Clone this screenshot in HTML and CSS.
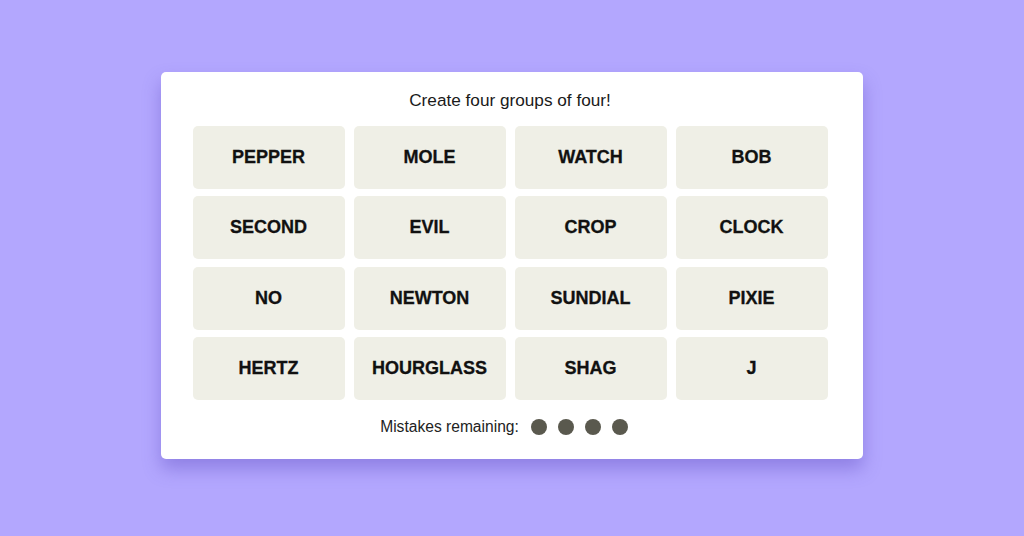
FILE: index.html
```html
<!DOCTYPE html>
<html>
<head>
<meta charset="utf-8">
<link rel="stylesheet" href="styles.css">
</head>
<body>
<div class="page">
  <div class="card">
    <div class="title">Create four groups of four!</div>
    <div class="grid">
      <div class="tile">PEPPER</div>
      <div class="tile">MOLE</div>
      <div class="tile">WATCH</div>
      <div class="tile">BOB</div>
      <div class="tile">SECOND</div>
      <div class="tile">EVIL</div>
      <div class="tile">CROP</div>
      <div class="tile">CLOCK</div>
      <div class="tile">NO</div>
      <div class="tile">NEWTON</div>
      <div class="tile">SUNDIAL</div>
      <div class="tile">PIXIE</div>
      <div class="tile">HERTZ</div>
      <div class="tile">HOURGLASS</div>
      <div class="tile">SHAG</div>
      <div class="tile">J</div>
    </div>
    <div class="mistakes">
      <span class="label">Mistakes remaining:</span>
      <span class="dots"><span class="dot"></span><span class="dot"></span><span class="dot"></span><span class="dot"></span></span>
    </div>
  </div>
</div>
</body>
</html>
```
FILE: styles.css
```css
html, body {
  margin: 0;
  padding: 0;
}
body {
  width: 1024px;
  height: 536px;
  background: #b3a7fe;
  font-family: "Liberation Sans", Arial, sans-serif;
  overflow: hidden;
}
.page {
  display: flex;
  justify-content: center;
  padding-top: 72px;
}
.card {
  width: 702px;
  height: 387px;
  box-sizing: border-box;
  background: #ffffff;
  border-radius: 5px;
  box-shadow: 0 10px 18px rgba(90, 70, 190, 0.4);
  padding-top: 18px;
  display: flex;
  flex-direction: column;
  align-items: center;
}
.title {
  font-size: 17.2px;
  line-height: 20px;
  color: #1a1a1a;
  height: 20px;
  margin-bottom: 16px;
  margin-right: 4px;
}
.grid {
  display: grid;
  grid-template-columns: repeat(4, 152px);
  grid-auto-rows: 63px;
  column-gap: 9px;
  row-gap: 7.33px;
  margin-right: 4px;
}
.tile {
  background: #efefe6;
  border-radius: 5px;
  display: flex;
  align-items: center;
  justify-content: center;
  font-weight: bold;
  font-size: 18px;
  color: #111111;
  -webkit-text-stroke: 0.3px #111111;
}
.mistakes {
  margin-top: 17px;
  height: 20px;
  display: flex;
  align-items: center;
  font-size: 15.6px;
  color: #222222;
  margin-right: 16px;
}
.label {
  margin-right: 12px;
}
.dots {
  display: flex;
  gap: 11px;
}
.dot {
  width: 16px;
  height: 16px;
  border-radius: 50%;
  background: #5a594e;
}
```
